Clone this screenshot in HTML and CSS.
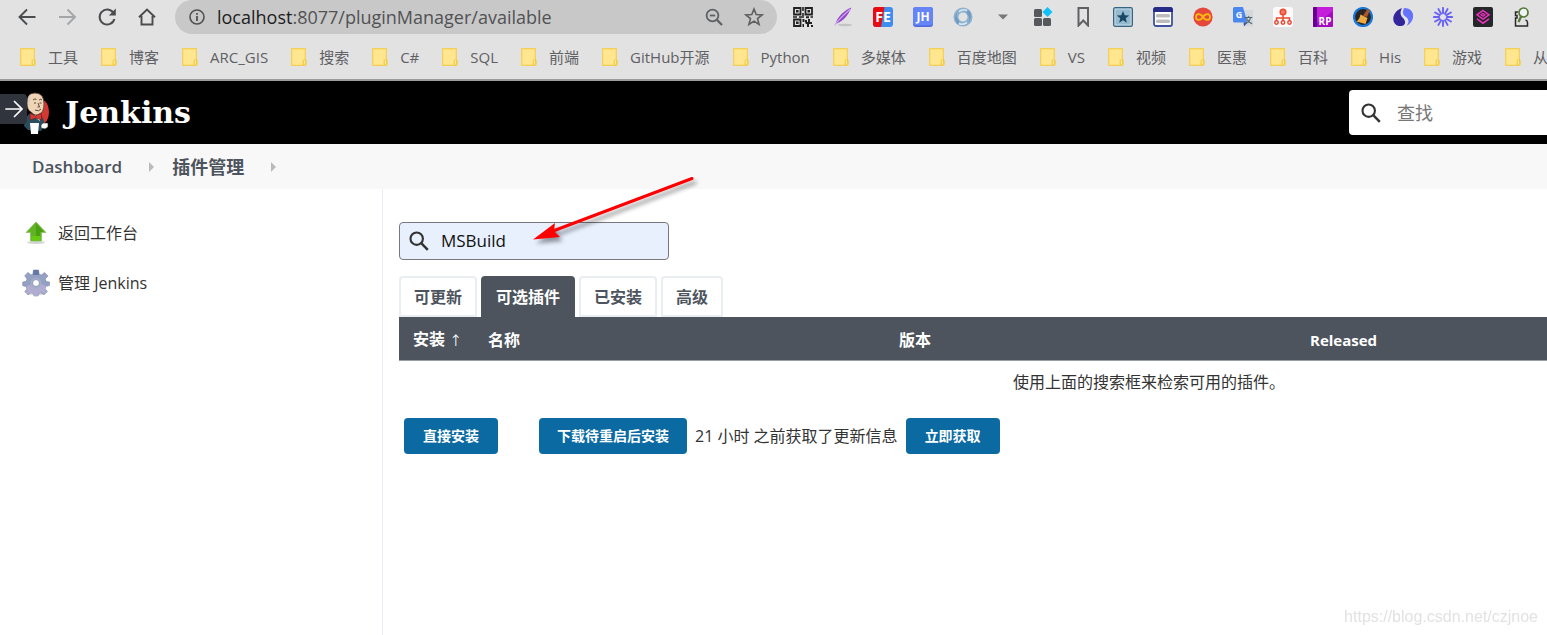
FILE: index.html
```html
<!DOCTYPE html>
<html lang="zh-CN">
<head>
<meta charset="utf-8">
<title>插件管理 [Jenkins]</title>
<link rel="stylesheet" href="styles.css">
</head>
<body>
<svg class="defs" aria-hidden="true">
  <symbol id="folder" viewBox="0 0 16 18">
    <path d="M.7.7h13.6v12.2h.8v3.3q0 1.2-1.4 1.2H.7z" fill="#ffe68f" stroke="#f4cf55" stroke-width="1.2"/>
    <path d="M12.2 17V13q0-1.3 1.4-1.3h1v4q0 1.5-1.4 1.5z" fill="#ffec9c" stroke="#f2c63c"/>
  </symbol>
  <symbol id="search" viewBox="0 0 20 20">
    <circle cx="7.7" cy="7.7" r="6.2" fill="none" stroke="currentColor" stroke-width="2.1"/>
    <path d="M12.2 12.2l6.6 6.6" stroke="currentColor" stroke-width="2.5"/>
  </symbol>
</svg>

<div class="browser">
  <div class="toolbar">
    <div class="nav">
      <button aria-label="后退"><svg viewBox="0 0 20 20" fill="none" stroke="#4b4c4e" stroke-width="1.9"><path d="M18.500 10H3M10 2.500L2.500 10l7.500 7.500"/></svg></button>
      <button aria-label="前进"><svg viewBox="0 0 20 20" fill="none" stroke="#a5a6a8" stroke-width="1.900"><path d="M2 10h15.500M10.500 2.500L18 10l-7.500 7.500"/></svg></button>
      <button aria-label="刷新"><svg viewBox="0 0 20 20" fill="none" stroke="#4b4c4e" stroke-width="2"><path d="M16.500 6A7.500 7.500 0 1 0 17.400 12"/><path d="M18.800 1.500v7h-7z" fill="#4b4c4e" stroke="none"/></svg></button>
      <button aria-label="主页"><svg viewBox="0 0 20 20" fill="none" stroke="#4b4c4e" stroke-width="1.900"><path d="M2 10.300L10 2.500l8 7.800M4.500 9v8.500h11V9"/></svg></button>
    </div>
    <div class="omnibox">
      <svg class="ico-16" viewBox="0 0 16 16"><circle cx="8" cy="8" r="7" fill="none" stroke="#4f5052" stroke-width="1.600"/><path d="M8 7v5M8 4v1.700" stroke="#4f5052" stroke-width="1.800"/></svg>
      <span class="url"><b>localhost</b>:8077/pluginManager/available</span>
      <button aria-label="缩放"><svg viewBox="0 0 20 20" fill="none" stroke="#5f6062" stroke-width="1.800"><circle cx="8.500" cy="8.500" r="5.900"/><path d="M5.800 8.500h5.400"/><path d="M12.800 12.800l5.200 5.200" stroke-width="2.300"/></svg></button>
      <button aria-label="收藏"><svg viewBox="0 0 20 20" fill="none" stroke="#5f6062" stroke-width="1.600"><path d="M10 2l2.200 5.500 5.900.4-4.600 3.700 1.600 5.900L10 14.200l-5.100 3.300 1.600-5.900L1.900 7.900l5.900-.4z"/></svg></button>
    </div>
    <div class="extensions">
      <svg viewBox="0 0 20 20"><g fill="none" stroke="#222" stroke-width="1.800"><path d="M1 1h6.500v6.500H1zM12.500 1H19v6.500h-6.500zM1 12.500h6.500V19H1z"/></g><path d="M3 3h2.600v2.600H3zM14.500 3H17v2.600h-2.500zM3 14.500h2.600V17H3zM9.200 0h1.600v4H9.200zM9.200 6h1.600v3H9.200zM0 9.300h4v1.500H0zM6 9.300h5v1.500H6zM13 9.300h3v2h-3zM17.500 9.300H20v1.500h-2.500zM9.500 12h2v3h-2zM12 13h2v2.500h-2zM15 12h2v3h2v2h-3v3h-2v-3h-3v3H9.500v-3h3v-2H15zM18 18h2v2h-2z" fill="#222"/></svg>
      <svg viewBox="0 0 20 20"><ellipse cx="12" cy="18" rx="7" ry="1.300" fill="#c4c4c4"/><path d="M18.500.5C12 3 4.500 9 2.500 17 11 13.500 14.500 9 18.500.5z" fill="#9148c8"/><path d="M17.500 2C11.500 7 6 12 1.500 18.500" fill="none" stroke="#d3a6ee" stroke-width="1.100"/></svg>
      <svg viewBox="0 0 20 20"><rect width="20" height="20" rx="3" fill="#3e8df0"/><path d="M3 0h8.500L8 20H3a3 3 0 0 1-3-3V3a3 3 0 0 1 3-3z" fill="#e80c12"/><text x="10" y="15" class="glyph glyph-14">FE</text></svg>
      <svg viewBox="0 0 20 20"><rect width="20" height="20" rx="3" fill="#5069dc"/><rect width="20" height="18.500" rx="3" fill="#6484f7"/><text x="10" y="14" class="glyph glyph-12">JH</text></svg>
      <svg viewBox="0 0 20 20"><circle cx="10" cy="10" r="7" fill="none" stroke="#8eb1cf" stroke-width="5"/><path d="M9 1.500C3 4 2.500 9 5 12c1.500 2 1.500 4-.5 5A9.500 9.500 0 0 1 9 1.500z" fill="#6f9bc0"/><path d="M11 18.500c6-2.500 6.500-7.500 4-10.500-1.500-2-1.500-4 .5-5A9.500 9.500 0 0 1 11 18.500z" fill="#6f9bc0"/><path d="M6 4.500q4-3 8-1M14 15.500q-4 3-8 1" fill="none" stroke="#d8e7f1" stroke-width="1.600"/></svg>
      <svg viewBox="0 0 20 20"><path d="M5 7.500h10l-5 5z" fill="#777"/></svg>
      <svg viewBox="0 0 20 20" fill="#55585d"><rect x="1" y="2" width="8" height="8" rx="1.500"/><rect x="1" y="11" width="8" height="8" rx="1.500"/><rect x="10" y="11" width="8" height="8" rx="1.500"/><path d="M14.500 0L19.500 5l-5 5-5-5z" fill="#0fc1fa"/></svg>
      <svg viewBox="0 0 20 20"><path d="M5.500 1h9.500v17.500l-4.700-5-4.800 5z" fill="none" stroke="#606164" stroke-width="2"/></svg>
      <svg viewBox="0 0 20 20"><rect x=".7" y=".7" width="18.600" height="18.600" rx="1.500" fill="#95b9cd" stroke="#366584" stroke-width="1.400"/><rect x="2" y="2" width="16" height="16" fill="none" stroke="#c4dce6"/><path d="M10 4l1.700 4.200 4.500.2-3.500 2.900 1.200 4.500L10 13.200l-3.900 2.600 1.200-4.500-3.500-2.900 4.500-.2z" fill="#1b4765"/></svg>
      <svg viewBox="0 0 20 20"><rect x="1" y="1" width="18" height="18" rx="2" fill="#fff" stroke="#40519f" stroke-width="1.800"/><path d="M0 3a3 3 0 0 1 3-3h14a3 3 0 0 1 3 3v2H0z" fill="#262c87"/><rect x="3" y="7" width="14" height="3.500" rx="1.500" fill="#bcbcbc"/><rect x="3" y="12.500" width="14" height="3.500" rx="1.500" fill="#bcbcbc"/></svg>
      <svg viewBox="0 0 20 20"><circle cx="10" cy="10" r="9.600" fill="#e5483a"/><path d="M10 10C7.500 6 3 6.200 3 10s4.500 4 7 0 7-3.800 7 0-4.500 4-7 0z" fill="none" stroke="#ffbd10" stroke-width="1.700"/></svg>
      <svg viewBox="0 0 20 20"><path d="M7 3h13v16.500h-7z" fill="#d5d8da"/><path d="M1.500 0H10l4.500 15.500h-13A1.500 1.500 0 0 1 0 14V1.500A1.500 1.500 0 0 1 1.500 0z" fill="#4a88ef"/><path d="M10.500 15.500h4L11 19.500z" fill="#3053b8"/><text x="6" y="11" class="glyph glyph-9">G</text><text x="15.500" y="16" class="glyph glyph-8 glyph-slate">文</text></svg>
      <svg viewBox="0 0 20 20"><rect width="20" height="20" rx="3" fill="#fafafa"/><g fill="none" stroke="#eb4930" stroke-width="1.500"><circle cx="10" cy="5" r="2.800" fill="#f57765"/><path d="M10 8v6M3.500 14v-3h13v3"/><circle cx="3.500" cy="15.500" r="1.700"/><circle cx="10" cy="15.500" r="1.700"/><circle cx="16.500" cy="15.500" r="1.700"/></g></svg>
      <svg viewBox="0 0 20 20"><rect width="20" height="20" rx="1" fill="#a20cbe"/><path d="M4 0h15a1 1 0 0 1 1 1v3L4 16z" fill="#c31fdb"/><path d="M1 0h3v20H1a1 1 0 0 1-1-1V1a1 1 0 0 1 1-1z" fill="#680091"/><text x="12" y="17.500" class="glyph glyph-10">RP</text></svg>
      <svg viewBox="0 0 20 20"><circle cx="10" cy="10" r="9" fill="#292522" stroke="#1878db" stroke-width="2.200"/><path d="M14.500 2l2.500 1-3 7-4-1.500z" fill="#ac552a"/><path d="M7.500 7.500l7 3.500-2 6-9-2.500q3-2 4-7z" fill="#edaa42"/></svg>
      <svg viewBox="0 0 20 20"><path d="M9 1C-2 5-2 17 5.500 19 14 20 13 13 9.500 10.500 7 8 7 5 9 1z" fill="#33259c"/><path d="M11 1c-2 5-1 7 2 9 3.500 2.500 3 6 .5 9C23 14 22.500 1 11 1z" fill="#6571ff"/></svg>
      <svg viewBox="0 0 20 20" stroke="#6861f6" stroke-width="1.900" stroke-linecap="round"><path d="M10 .9v5.300M10 13.800v5.300M.9 10h5.300M13.800 10h5.300M5.450 2.100l2.650 4.600M11.900 13.300l2.650 4.600M14.550 2.100L11.900 6.700M8.100 13.300l-2.650 4.600M2.100 5.450l4.600 2.650M13.300 11.900l4.600 2.650M17.900 5.450L13.300 8.100M6.700 11.900l-4.600 2.650"/></svg>
      <svg viewBox="0 0 20 20"><rect width="20" height="20" rx="2" fill="#26272a"/><g fill="none" stroke="#f02fc4" stroke-width="1.500"><path d="M10 3.500l6 4.300-6 4.300-6-4.300zM4 11.800l6 4.400 6-4.400"/><path d="M8 7.800l2-1.400 2 1.400-2 1.400z" stroke-width="1.200"/></g></svg>
      <svg viewBox="0 0 20 20" fill="none"><path d="M5 5H2.500v3.500H4v2.500H2.500V19h12v-3.500q0-2-2-2.500" stroke="#2a2a2a" stroke-width="1.500"/><circle cx="10.500" cy="5.500" r="4.500" fill="#f0f4f1" stroke="#527837" stroke-width="1.700"/><path d="M8 9.500L5.500 15" stroke="#527837" stroke-width="2.300"/></svg>
    </div>
  </div>
  <nav class="bookmarks" aria-label="书签栏">
    <a href="#"><svg><use href="#folder"/></svg>工具</a>
    <a href="#"><svg><use href="#folder"/></svg>博客</a>
    <a href="#"><svg><use href="#folder"/></svg>ARC_GIS</a>
    <a href="#"><svg><use href="#folder"/></svg>搜索</a>
    <a href="#"><svg><use href="#folder"/></svg>C#</a>
    <a href="#"><svg><use href="#folder"/></svg>SQL</a>
    <a href="#"><svg><use href="#folder"/></svg>前端</a>
    <a href="#"><svg><use href="#folder"/></svg>GitHub开源</a>
    <a href="#"><svg><use href="#folder"/></svg>Python</a>
    <a href="#"><svg><use href="#folder"/></svg>多媒体</a>
    <a href="#"><svg><use href="#folder"/></svg>百度地图</a>
    <a href="#"><svg><use href="#folder"/></svg>VS</a>
    <a href="#"><svg><use href="#folder"/></svg>视频</a>
    <a href="#"><svg><use href="#folder"/></svg>医惠</a>
    <a href="#"><svg><use href="#folder"/></svg>百科</a>
    <a href="#"><svg><use href="#folder"/></svg>His</a>
    <a href="#"><svg><use href="#folder"/></svg>游戏</a>
    <a href="#"><svg><use href="#folder"/></svg>从</a>
  </nav>
</div>

<header class="header">
  <button class="drawer" aria-label="展开"><svg viewBox="0 0 18 18" fill="none" stroke="#fff" stroke-width="1.700" stroke-linecap="round"><path d="M1 9h16M9.500 1.500L17 9l-7.500 7.500"/></svg></button>
  <a class="logo" href="#">
    <svg viewBox="0 0 28 44">
      <ellipse cx="19" cy="21" rx="7" ry="12" fill="#d33833"/>
      <path d="M1 35q1-8 5-12l12 1q4 5 3 12l-3 4-13-1z" fill="#294e60"/>
      <path d="M4 12Q4 2 12 2q9 0 9 11 0 9-6 11-4 1-7-3-4-2-4-9z" fill="#efd4b5" stroke="#53413a" stroke-width=".8"/>
      <path d="M5 11Q4 5 8 3l-2 9 1 4z" fill="#d5cdc1"/>
      <path d="M10 9q2-2 3.500-.5M16 9q2-1.500 3 0M11 12h2M16.500 12h2M15 12l1.500 4h-2M12 19q4 2 6-1" fill="none" stroke="#49372f" stroke-width=".9"/>
      <path d="M9 24l8 6-1-5z" fill="#fff"/>
      <path d="M7 22l5.500 3 5.500-3 1 7-6-2-6 2z" fill="#d33833" stroke="#681b20" stroke-width=".7"/>
      <path d="M7 32h9l-1 11H8z" fill="#fff"/>
      <path d="M18 34q2-3 4-2h3v4l-3 2-4-1z" fill="#fff" stroke="#222" stroke-width=".6"/>
    </svg>
    <span>Jenkins</span>
  </a>
  <label class="header-search"><svg><use href="#search"/></svg><input type="text" placeholder="查找" aria-label="查找"></label>
</header>

<nav class="breadcrumbs" aria-label="导航">
  <a href="#" class="latin">Dashboard</a><i></i><a href="#">插件管理</a><i></i>
</nav>

<div class="page">
  <aside class="side">
    <a href="#"><svg viewBox="0 0 28 28"><ellipse cx="14" cy="23.500" rx="9" ry="1.500" fill="#d2d2d2"/><path d="M14 3l10 10.500h-4.500V22h-11v-8.500H4z" fill="#62b323" stroke="#8cc367" stroke-width=".8"/><path d="M14 4.500l8 8.500h-4v8h-4z" fill="#4ba012"/><path d="M9.500 17h9v4.500h-9z" fill="#68c912"/></svg>返回工作台</a>
    <a href="#"><svg viewBox="0 0 28 28"><ellipse cx="14" cy="25" rx="9" ry="1.500" fill="#ddd"/><g fill="#94a1c2" stroke="#7e89ac" stroke-width=".6"><path d="M11.500 1h5l.6 4 2.200 1 3.300-2.600 3.400 3.500L23.200 10l1 2.500 3.300.5v3.500l-3.500.8-1 2.400 2.400 3-3.300 3-3.100-2-2.300 1-.7 2.300h-3.800l-.8-2.400-2.400-1-3 2.300-3.200-3.300L5 20l-1-2.500-3.300-.8v-3.600l3.500-.8L5 10 2.700 6.700 6 3.400 9 6l2-1z"/></g><path d="M4 18q10-7 20-1l-1 4 2 2-2.500 2-3-2-3 1.500-1 2.500h-3l-1-2.500-3-1-3 2L3.500 23l2-3z" fill="#b0add0"/><path d="M11.500 1h5l.6 5H11z" fill="#6478a5"/><circle cx="14" cy="14" r="5.500" fill="#a3acc9"/><circle cx="14" cy="14" r="3.500" fill="#fff" stroke="#8e99b8"/></svg>管理 Jenkins</a>
  </aside>
  <main class="main">
    <div class="filter">
      <label><svg><use href="#search"/></svg><input type="text" value="MSBuild" aria-label="搜索插件"></label>
      <svg class="pointer" viewBox="0 0 180 80" aria-hidden="true"><g fill="#fe0000"><path d="M161 10.500L22 63" stroke="#fe0000" stroke-width="3" stroke-linecap="round"/><path d="M2 71.500L24 55l-1 8 6 6z"/></g></svg>
    </div>
    <div class="tabs">
      <a href="#">可更新</a><a href="#" class="active">可选插件</a><a href="#">已安装</a><a href="#">高级</a>
    </div>
    <div class="table-wrap">
      <table>
        <colgroup><col class="c-install"><col class="c-name"><col class="c-name"><col></colgroup>
        <thead><tr><th>安装 <span>↑</span></th><th>名称</th><th>版本</th><th>Released</th></tr></thead>
        <tbody><tr><td colspan="4">使用上面的搜索框来检索可用的插件。</td></tr></tbody>
      </table>
    </div>
    <div class="actions">
      <button>直接安装</button>
      <button class="later">下载待重启后安装</button>
      <span>21 小时 之前获取了更新信息</span>
      <button>立即获取</button>
    </div>
  </main>
</div>
<div class="watermark">https://blog.csdn.net/czjnoe</div>
</body>
</html>
```
FILE: styles.css
```css
* { box-sizing: border-box; }

body {
  margin: 0;
  min-height: 100vh;
  display: flex;
  flex-direction: column;
  overflow: hidden;
  background: #fff;
  color: #333;
  font: 16px/24px "Open Sans", "Noto Sans CJK SC", sans-serif;
}

a { color: inherit; text-decoration: none; }
button { font: inherit; border: 0; padding: 0; background: none; cursor: pointer; }
input { font: inherit; border: 0; outline: 0; background: none; padding: 0; min-width: 0; }
svg { display: block; flex: none; }
.defs { position: absolute; width: 0; height: 0; }

/* Browser bars */
.browser { background: #e2e2e2; border-bottom: 2px solid #9c9c9c; }
.toolbar { display: flex; align-items: center; height: 34px; padding: 0 14px 0 17px; }
.nav { display: flex; gap: 20px; margin-right: 18px; }
.nav svg, .omnibox button svg, .extensions svg { width: 20px; height: 20px; }
.omnibox {
  flex: 1;
  display: flex;
  align-items: center;
  gap: 20px;
  height: 34px;
  padding: 0 13px 0 14px;
  margin-right: 16px;
  border-radius: 17px;
  background: #c8c8c8;
  color: #515254;
  font-size: 18px;
}
.ico-16 { width: 16px; height: 16px; }
.url { flex: 1; margin-left: -8px; white-space: nowrap; }
.url b { font-weight: 400; color: #1c1c1e; }
.extensions { display: flex; gap: 20px; }
.glyph { font-family: "Open Sans", "Noto Sans CJK SC", sans-serif; font-weight: 700; fill: #fff; text-anchor: middle; }
.glyph-14 { font-size: 14px; }
.glyph-12 { font-size: 12px; }
.glyph-10 { font-size: 10px; }
.glyph-9 { font-size: 9px; }
.glyph-8 { font-size: 8px; }
.glyph-slate { fill: #52666b; }

.bookmarks {
  display: flex;
  align-items: center;
  gap: 23px;
  height: 45px;
  padding-left: 20px;
  overflow: hidden;
  color: #5f6063;
  font-size: 15px;
  white-space: nowrap;
}
.bookmarks a { display: flex; align-items: center; gap: 12px; }
.bookmarks svg { width: 16px; height: 18px; }

/* Jenkins header */
.header { position: relative; display: flex; align-items: center; height: 63px; background: #000; }
.drawer {
  position: absolute;
  left: 0;
  top: 13px;
  z-index: 1;
  display: flex;
  align-items: center;
  width: 27px;
  height: 30px;
  padding-left: 5px;
  border-radius: 0 4px 4px 0;
  background: #30343d;
}
.drawer svg { width: 18px; height: 18px; }
.logo { display: flex; align-items: center; gap: 14px; margin-left: 23px; color: #fff; font: 700 30px/40px "DejaVu Serif", serif; }
.logo svg { width: 28px; height: 44px; }
.header-search {
  display: flex;
  align-items: center;
  gap: 16px;
  width: 198px;
  height: 45px;
  margin-left: auto;
  padding-left: 12px;
  border-radius: 4px 0 0 4px;
  background: #fff;
  color: #333;
  font-size: 18px;
}
.header-search svg, .filter label svg { width: 20px; height: 20px; }
.header-search input { flex: 1; }
.header-search input::placeholder { color: #777; }

.breadcrumbs {
  display: flex;
  align-items: center;
  height: 45px;
  padding-left: 32px;
  background: #f8f8f8;
  color: #4d545d;
  font-size: 18px;
  font-weight: 600;
}
.breadcrumbs .latin { font-size: 17px; }
.breadcrumbs i { margin: 0 18px 0 27px; border: 5px solid transparent; border-left-color: #b8bbbe; border-right-width: 0; }

/* Page body */
.page { flex: 1; display: flex; }
.side { flex: none; width: 383px; padding: 30px 22px; border-right: 1px solid #e9eef2; }
.side a { display: flex; align-items: center; gap: 8px; height: 28px; margin-bottom: 22px; }
.side svg { width: 28px; height: 28px; }
.main { flex: 1; min-width: 0; padding: 33px 0 0 16px; }

.filter { position: relative; width: 270px; margin-bottom: 16px; }
.filter label {
  display: flex;
  align-items: center;
  gap: 12px;
  height: 38px;
  padding: 0 9px;
  border: 1px solid #77787d;
  border-radius: 4px;
  background: #e8f0fe;
}
.filter input { flex: 1; color: #111; font-size: 17px; }
.pointer { position: absolute; left: 132px; top: -54px; width: 180px; height: 80px; filter: drop-shadow(3px 4px 2px #0006); pointer-events: none; }

.tabs { display: flex; gap: 4px; color: #4d545d; font-weight: 600; }
.tabs a { padding: 7px 13px 6px; border: 2px solid #e9eef2; border-radius: 4px 4px 0 0; }
.tabs .active { background: #4d545d; border-color: #4d545d; color: #fff; }

.table-wrap { overflow: hidden; }
table { width: 100%; min-width: 1500px; table-layout: fixed; border-collapse: collapse; }
.c-install { width: 75px; }
.c-name { width: 411px; }
thead { background: #4d545d; color: #fff; }
th { padding: 10px 0 8px 14px; border-bottom: 1px solid #979ea4; text-align: left; font-size: 16px; font-weight: 700; white-space: nowrap; }
th span { font-size: 13px; font-weight: 400; }
th:last-child { font-size: 15px; }
td { padding: 9px 0; text-align: center; }

.actions { display: flex; align-items: center; gap: 8px; padding: 15px 0 0 5px; }
.actions button { height: 36px; padding: 0 19px; border-radius: 4px; background: #0b6aa2; color: #fff; font-size: 14px; font-weight: 700; }
.actions .later { margin-left: 33px; padding: 0 18px; }

.watermark { position: fixed; right: 9px; bottom: 8px; color: #e2e2e2; font: 16px/20px "Liberation Sans", sans-serif; }
```
